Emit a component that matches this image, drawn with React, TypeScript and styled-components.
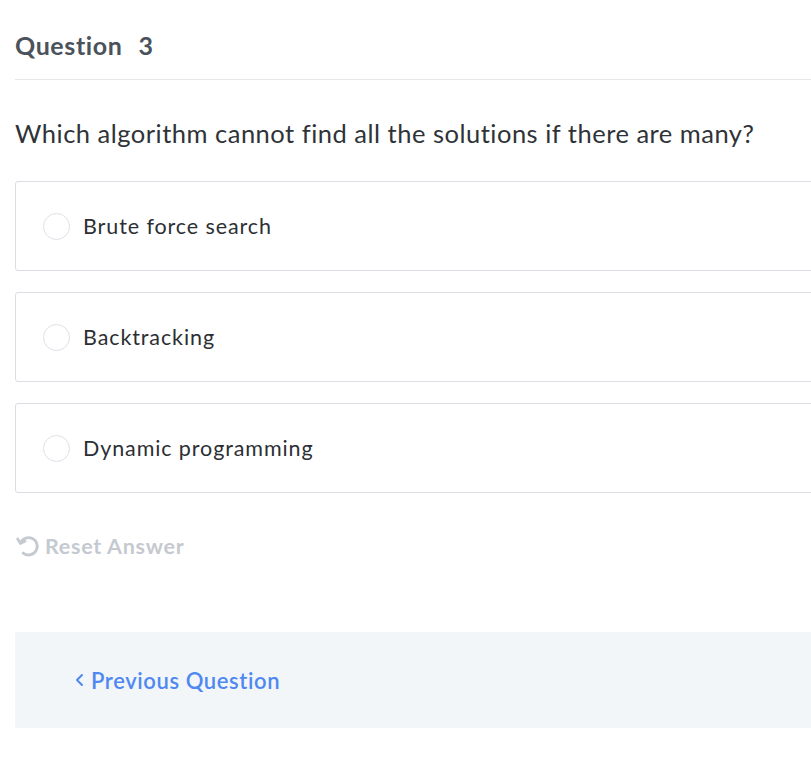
import React, { FC } from 'react';
import styled, { createGlobalStyle } from 'styled-components';

const GlobalStyle = createGlobalStyle`
  html, body {
    margin: 0;
    padding: 0;
    background: #fff;
    overflow: hidden;
  }
  body {
    font-family: Lato, "Open Sans", "Liberation Sans", sans-serif;
  }
`;

const Page = styled.div`
  width: 860px;
  padding: 0 0 0 15px;
`;

const Header = styled.div`
  display: flex;
  align-items: center;
  gap: 16px;
  height: 80px;
  box-sizing: border-box;
  padding-top: 12px;
  border-bottom: 1px solid #e6e7ea;
  font-size: 25px;
  font-weight: 700;
  color: #4a525c;
  letter-spacing: 0.6px;
  line-height: 1;
`;

const QuestionText = styled.h2`
  margin: 38px 0 33px;
  font-size: 25.5px;
  line-height: 30px;
  font-weight: 400;
  color: #2f3338;
  letter-spacing: 0.5px;
`;

const Options = styled.ul`
  list-style: none;
  margin: 0;
  padding: 0;
  display: flex;
  flex-direction: column;
  gap: 21px;
`;

const Option = styled.li`
  display: flex;
  align-items: center;
  gap: 13px;
  height: 90px;
  box-sizing: border-box;
  padding-left: 27px;
  border: 1px solid #dcdde3;
  border-radius: 3px;
  font-size: 21.5px;
  color: #2c2f33;
  letter-spacing: 0.9px;
  cursor: pointer;
`;

const Radio = styled.span`
  width: 25px;
  height: 25px;
  border-radius: 50%;
  border: 1px solid #dfe0e6;
  background: #fff;
`;

const Reset = styled.button`
  display: flex;
  align-items: center;
  gap: 4px;
  margin: 40px 0 0;
  padding: 0;
  border: 0;
  background: none;
  font-family: inherit;
  font-size: 21.5px;
  font-weight: 700;
  letter-spacing: 0.7px;
  color: #c5c9d0;
  cursor: pointer;
`;

const Footer = styled.div`
  margin-top: 73px;
  height: 96px;
  display: flex;
  align-items: center;
  padding-left: 60px;
  background: #f3f6f9;
`;

const PrevLink = styled.a`
  display: flex;
  align-items: center;
  gap: 6px;
  font-size: 22px;
  font-weight: 600;
  color: #4f88f0;
  text-decoration: none;
  letter-spacing: 0.6px;
`;

const answers = ['Brute force search', 'Backtracking', 'Dynamic programming'];

const App: FC = () => (
  <Page>
    <GlobalStyle />
    <Header>
      <span>Question</span>
      <span>3</span>
    </Header>
    <QuestionText>Which algorithm cannot find all the solutions if there are many?</QuestionText>
    <Options>
      {answers.map((a) => (
        <Option key={a}>
          <Radio />
          {a}
        </Option>
      ))}
    </Options>
    <Reset>
      <svg width="26" height="26" viewBox="0 0 24 24" fill="none" stroke="#c5c9d0" strokeWidth="2.6" strokeLinecap="round" strokeLinejoin="round">
        <path d="M5 9.5A8 8 0 1 1 7.5 18.5" />
        <path d="M2.5 5.5 5 9.5l4.2-2" />
      </svg>
      Reset Answer
    </Reset>
    <Footer>
      <PrevLink href="#">
        <svg width="10" height="14" viewBox="0 0 10 14" fill="none" stroke="#4f88f0" strokeWidth="2" strokeLinecap="round" strokeLinejoin="round">
          <path d="M7 2 2 7l5 5" />
        </svg>
        Previous Question
      </PrevLink>
    </Footer>
  </Page>
);

export default App;
